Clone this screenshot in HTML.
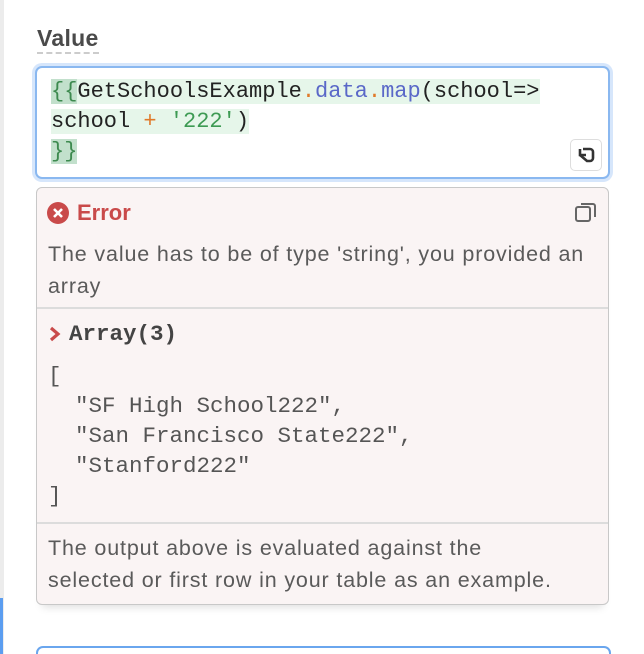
<!DOCTYPE html>
<html><head><style>
html,body{margin:0;width:644px;height:654px;overflow:hidden}
body{background:#fff;position:relative;font-family:"Liberation Sans",sans-serif}
.wrap{position:absolute;left:0;top:0;width:644px;height:654px;overflow:hidden}
.strip{position:absolute;left:0;top:0;width:4px;height:654px;background:#ececec}
.strip2{position:absolute;left:0;top:598px;width:3px;height:56px;background:#5b9df0}
.lbl{position:absolute;left:37px;top:24px;font-size:23px;font-weight:bold;color:#4a4a4a;border-bottom:2px dashed #ccc;line-height:28px;letter-spacing:0.3px}
.inp{position:absolute;left:35px;top:66px;width:571px;height:109px;border:2px solid #8ab8f0;border-radius:7px;box-shadow:0 0 0 3px #d6e6fb;background:#fff}
.mono{font-family:"Liberation Mono",monospace;font-size:22.5px;color:#222}
.code{position:absolute;left:14px;top:9px;line-height:30px;font-size:22px}
.hl{background:#e6f6ea}
.br{background:#c2e0cc;color:#3d8a4f}
.g{color:#3d9a53}.b{color:#5a68c8}.o{color:#e07a2a}
.rb{position:absolute;right:6px;bottom:6px;width:30px;height:30px;border:1px solid #ddd;border-radius:5px;background:#fff}
.err{position:absolute;left:36px;top:187px;width:571px;height:416px;border:1.5px solid #c8c8c8;border-radius:6px;background:#faf4f4;box-shadow:0 8px 8px -6px #ddd}
.t{position:absolute;left:11px;color:#5a5a5a;font-size:21.5px;line-height:32px;letter-spacing:0.85px;white-space:nowrap}
.sep{position:absolute;left:0;width:100%;height:1.5px;background:#dcdcdc}
</style></head><body>
<div class="wrap">
<div class="strip"></div><div class="strip2"></div>
<div class="lbl">Value</div>
<div class="inp">
<div class="code mono"><span class="hl"><span class="br">{{</span>GetSchoolsExample<span class="o">.</span><span class="b">data</span><span class="o">.</span><span class="b">map</span>(school=&gt; </span><br><span class="hl">school <span class="o">+</span> <span class="g">'222'</span>)</span><br><span class="br">}}</span></div>
<div class="rb"><svg width="30" height="30" viewBox="0 0 30 30"><path d="M9 9v6h6" fill="none" stroke="#333" stroke-width="2.6"/><path d="M9 15l7 6h3a3 3 0 0 0 3-3v-6a3 3 0 0 0-3-3h-7" fill="none" stroke="#333" stroke-width="2.6"/></svg></div>
</div>
<div class="err">
<svg style="position:absolute;left:10px;top:14px" width="22" height="22" viewBox="0 0 22 22"><circle cx="11" cy="11" r="11" fill="#c94a4a"/><path d="M7 7l8 8M15 7l-8 8" stroke="#fff" stroke-width="2.6"/></svg>
<div style="position:absolute;left:40px;top:10px;font-size:22px;font-weight:bold;color:#c94a4a;line-height:30px">Error</div>
<svg style="position:absolute;right:10px;top:13px" width="24" height="22" viewBox="0 0 24 22"><rect x="2" y="6" width="14" height="14" rx="2" fill="none" stroke="#666" stroke-width="2"/><path d="M7 3h12a2 2 0 0 1 2 2v11" fill="none" stroke="#666" stroke-width="2"/></svg>
<div class="t" style="top:50px">The value has to be of type 'string', you provided an<br>array</div>
<div class="sep" style="top:119px"></div>
<svg style="position:absolute;left:11px;top:138px" width="14" height="16" viewBox="0 0 14 16"><path d="M3 2l7 6-7 6" fill="none" stroke="#c94a4a" stroke-width="3.2"/></svg>
<div class="mono" style="position:absolute;left:32px;top:131px;font-weight:bold;color:#444;line-height:30px">Array(3)</div>
<div class="mono" style="position:absolute;left:11px;top:173px;line-height:30px;color:#555;white-space:pre">[
  "SF High School222",
  "San Francisco State222",
  "Stanford222"
]</div>
<div class="sep" style="top:334px"></div>
<div class="t" style="top:344px">The output above is evaluated against the<br>selected or first row in your table as an example.</div>
</div>
<div style="position:absolute;left:36px;top:646px;width:571px;height:6px;border:2px solid #6aa6ee;border-bottom:none;border-radius:7px 7px 0 0"></div>
</div>
</body></html>
